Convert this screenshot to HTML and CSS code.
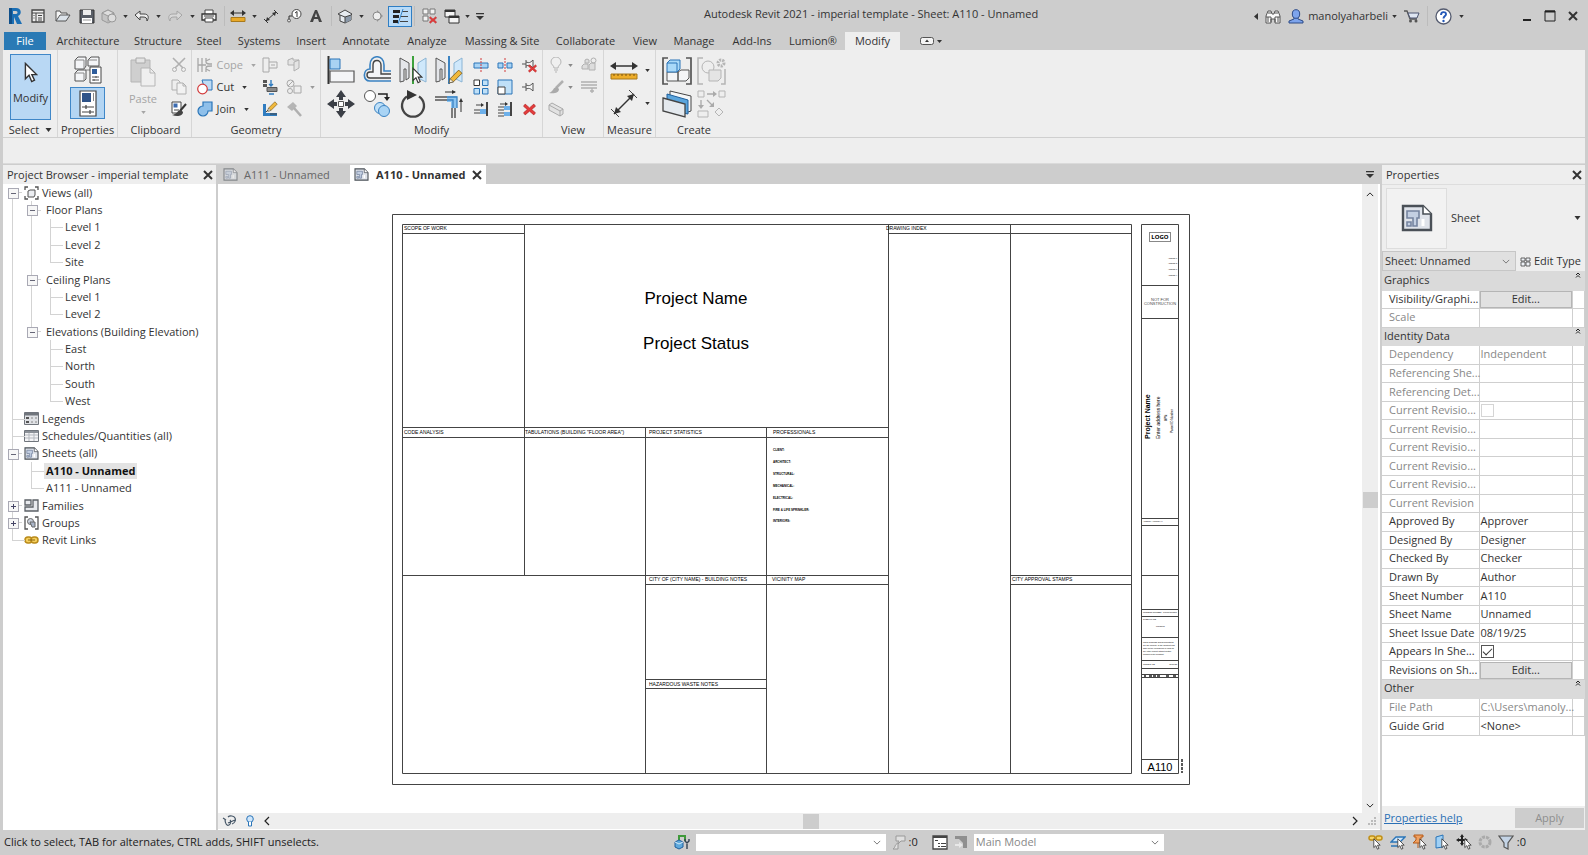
FILE: index.html
```html
<!DOCTYPE html>
<html lang="en">
<head>
<meta charset="utf-8">
<title>Autodesk Revit 2021 - imperial template - Sheet: A110 - Unnamed</title>
<link rel="stylesheet" href="styles.css">
</head>
<body>
<svg class="defs" aria-hidden="true">
  <symbol id="sheet" viewBox="0 0 16 14"><path d="M1 1h10l4 4v8H1z" fill="#dfe3ea" stroke="#4a5057" stroke-width="1.200"/><path d="M11 1v4h4" fill="#fff" stroke="#4a5057" stroke-width=".8"/><path d="M3 3.500h6v3.500h-1v4H6V7H3zM3 9h2v2H3z" fill="#c3cfe2" stroke="#7584a0" stroke-width=".8"/><path d="M11 11V7.500" stroke="#fff" stroke-width="1.500"/></symbol>
  <symbol id="arrow" viewBox="0 0 6 4"><path d="M0 0h6L3 4z" fill="currentColor"/></symbol>
  <symbol id="cursor" viewBox="0 0 10 15"><path d="M1 1v11l2.600-2.500L5.500 14l2-1-1.900-4H9z" fill="#fff" stroke="#333" stroke-width="1"/></symbol>
  <symbol id="chev" viewBox="0 0 10 6"><path d="M1 1l4 4 4-4" fill="none" stroke="currentColor" stroke-width="1.200"/></symbol>
  <symbol id="cross" viewBox="0 0 10 10"><path d="M1 1l8 8M9 1L1 9" stroke="currentColor" stroke-width="2"/></symbol>
  <symbol id="fold" viewBox="0 0 6 6"><path d="M1 3l2-2 2 2M1 5.500l2-2 2 2" fill="none" stroke="#222" stroke-width="1"/></symbol>
  <symbol id="redx" viewBox="0 0 12 12"><path d="M2 1L6 4.500 10 1l1.500 2L8 6l3.500 3-1.500 2L6 7.500 2 11 .5 9 4 6 .5 3z" fill="#e33b3b" stroke="#b02020" stroke-width=".6"/></symbol>
  <symbol id="pencil" viewBox="0 0 14 14"><path d="M1 13l1-4 8-8 3 3-8 8z" fill="#f1b93c" stroke="#7a5a1c" stroke-width=".8"/><path d="M1 13l1-4 3 3z" fill="#fff5dd" stroke="#444" stroke-width=".6"/></symbol>
</svg>

<header class="titlebar">
  <nav class="quick" aria-label="Quick access">
    <button aria-label="Revit menu"><svg width="16" height="18" viewBox="0 0 16 18"><path d="M2 1h7c6 0 6 7 2 8l4 8h-5L7 10v7H2z" fill="#1b6fb5"/><path d="M6 4h3c2 0 2 3 0 3H6z" fill="#cdcdcd"/><path d="M2 1h3v16H2z" fill="#0f4f8a"/></svg></button>
    <button aria-label="Home"><svg width="14" height="14" viewBox="0 0 14 14"><path d="M1 1h12v12H1z" fill="#eee" stroke="#444" stroke-width="1.300"/><path d="M1 4h12M5 4v9M2.500 6.500h1M2.500 9h1M7 6.500h4M7 9h4M7 11h4" stroke="#444" fill="none"/></svg></button>
    <button aria-label="Open"><svg width="16" height="14" viewBox="0 0 16 14"><path d="M1 12V2h4l1 2h6v3" fill="#f4f4f4" stroke="#555"/><path d="M1 12l4-6h10l-4 6z" fill="#dce3ea" stroke="#555"/></svg></button>
    <button aria-label="Save"><svg width="16" height="15" viewBox="0 0 16 15"><path d="M1 1h14v13H1z" fill="#5a5f68" stroke="#333"/><path d="M4 1h8v5H4z" fill="#eee"/><path d="M3 9h10v5H3z" fill="#fff"/><path d="M4 11h8" stroke="#999"/></svg></button>
    <button aria-label="Synchronize"><svg width="16" height="15" viewBox="0 0 16 15"><path d="M1 4l6-3 6 3v7l-6 3-6-3z" fill="#c4c4c4" stroke="#999"/><path d="M1 4l6-3 6 3-6 3z" fill="#dedede" stroke="#999"/><path d="M7 7v7" stroke="#aaa" fill="none"/><circle cx="11" cy="9" r="4" fill="#ddd" stroke="#999"/></svg></button>
    <button class="dd" aria-label="Synchronize options"><svg width="5" height="3"><use href="#arrow"/></svg></button>
    <button aria-label="Undo"><svg width="16" height="12" viewBox="0 0 16 12"><path d="M1 5l5-4v3h4c5 0 5 4 3 7 0-3-1-4-4-4H6v3z" fill="#eee" stroke="#444"/></svg></button>
    <button class="dd" aria-label="Undo list"><svg width="5" height="3"><use href="#arrow"/></svg></button>
    <button aria-label="Redo"><svg width="16" height="12" viewBox="0 0 16 12"><path d="M15 5l-5-4v3H6C1 4 1 8 3 11c0-3 1-4 4-4h3v3z" fill="#d8d8d8" stroke="#a5a5a5"/></svg></button>
    <button class="dd" aria-label="Redo list"><svg width="5" height="3"><use href="#arrow"/></svg></button>
    <button aria-label="Print"><svg width="16" height="14" viewBox="0 0 16 14"><path d="M4 5V1h8v4" fill="#fff" stroke="#444"/><path d="M1 5h14v6H1z" fill="#f2f2f2" stroke="#333" stroke-width="1.300"/><path d="M4 9h8v4H4z" fill="#fff" stroke="#444"/><path d="M3 7h10" stroke="#444"/></svg></button>
    <i class="vsep"></i>
    <button aria-label="Measure"><svg width="16" height="12" viewBox="0 0 16 12"><path d="M2 3h12" stroke="#333"/><path d="M4 0v6L0 3zM12 0v6l4-3z" fill="#333"/><path d="M1 7.500h14v4H1z" fill="#e9a928" stroke="#a97a1c"/></svg></button>
    <button class="dd" aria-label="Measure options"><svg width="5" height="3"><use href="#arrow"/></svg></button>
    <button aria-label="Aligned dimension"><svg width="16" height="15" viewBox="0 0 16 15"><path d="M3 12L13 3M1 10l4 4M11 1l4 4" stroke="#333"/><path d="M3 12l1-4 3 3zM13 3l-1 4-3-3z" fill="#333"/></svg></button>
    <button aria-label="Tag by category"><svg width="15" height="14" viewBox="0 0 15 14"><circle cx="9.500" cy="5" r="4.500" fill="#fff" stroke="#444"/><path d="M8 4l2-1.500V8" fill="none" stroke="#333"/><path d="M5 7H2v4" fill="none" stroke="#333"/><circle cx="2" cy="11.500" r="1.500" fill="#ddd" stroke="#333" stroke-width=".7"/></svg></button>
    <button aria-label="Text"><svg width="14" height="14" viewBox="0 0 14 14"><path d="M1 13L6 1h2l5 12h-3l-1-3H5l-1 3z" fill="#444"/><path d="M5.700 8h2.600L7 4z" fill="#cdcdcd"/></svg></button>
    <i class="vsep"></i>
    <button aria-label="3D view"><svg width="16" height="15" viewBox="0 0 16 15"><path d="M1 5l7-4 7 4-1 1v5l-6 3-5-2V6z" fill="#e6ebf0" stroke="#444"/><path d="M8 8l6-2v5l-6 3z" fill="#8a98a8"/><path d="M3 6l5 2 6-2M8 8v6" fill="none" stroke="#444"/></svg></button>
    <button class="dd" aria-label="3D view options"><svg width="5" height="3"><use href="#arrow"/></svg></button>
    <button aria-label="Section"><svg width="13" height="12" viewBox="0 0 13 12"><path d="M6 0l6 6-6 6z" fill="#999"/><circle cx="6" cy="6" r="4" fill="#eee" stroke="#888"/></svg></button>
    <button class="lit" aria-label="Thin lines" aria-pressed="true"><svg width="17" height="15" viewBox="0 0 17 15"><path d="M1 2.500h7M1 7.500h6M1 12.500h5" stroke="#222" stroke-width="3"/><path d="M10 2.500h6M9 7.500h7M8 12.500h8" stroke="#444"/><path d="M11 0L6 15" stroke="#3a86c8"/></svg></button>
    <i class="vsep"></i>
    <button aria-label="Close inactive views"><svg width="15" height="16" viewBox="0 0 15 16"><path d="M1 1h5v5H1zM8 1h5v5H8zM1 8h5v5H1z" fill="#f2f2f2" stroke="#777"/><svg x="7" y="8" width="8" height="8"><use href="#redx"/></svg></svg></button>
    <button aria-label="Switch windows"><svg width="16" height="15" viewBox="0 0 16 15"><path d="M1 1h10v7H1zM5 7h10v7H5z" fill="#f4f4f4" stroke="#333"/><path d="M1 2h10M5 8h10" stroke="#333" stroke-width="2"/></svg></button>
    <button class="dd" aria-label="Switch windows list"><svg width="5" height="3"><use href="#arrow"/></svg></button>
    <button class="dd" aria-label="Customize toolbar"><svg width="8" height="7" viewBox="0 0 8 7"><path d="M0 0h8v1.300H0zM0 3h8L4 7z" fill="#333"/></svg></button>
  </nav>
  <h1 class="apptitle">Autodesk Revit 2021 - imperial template - Sheet: A110 - Unnamed</h1>
  <div class="account">
    <button class="dd" aria-label="Collapse search"><svg width="4" height="7" viewBox="0 0 4 7"><path d="M4 0v7L0 3.500z" fill="#333"/></svg></button>
    <button aria-label="Search"><svg width="16" height="15" viewBox="0 0 16 15"><path d="M1 14V7l2-5h3l1 3h2l1-3h3l2 5v7h-5v-4H6v4z" fill="#fafafa" stroke="#555"/><path d="M3 4h3M10 4h3M1 8h5v5M15 8h-5v5M3 8v5M13 8v5" stroke="#555" fill="none"/></svg></button>
    <button class="user"><svg width="16" height="15" viewBox="0 0 16 15"><path d="M1 14v-2l5-2V8h4v2l5 2v2z" fill="#7da4ec" stroke="#2c4a86"/><ellipse cx="8" cy="5" rx="3.700" ry="4.300" fill="#7da4ec" stroke="#2c4a86"/></svg><span>manolyaharbeli</span><svg width="5" height="3"><use href="#arrow"/></svg></button>
    <button aria-label="App store"><svg width="16" height="14" viewBox="0 0 16 14"><path d="M0 2h3l3 8h7" fill="none" stroke="#555" stroke-width="1.300"/><path d="M4 4h11l-2 5H6z" fill="#dfe6f2" stroke="#4c5570"/><circle cx="6.500" cy="12" r="1.500" fill="#555"/><circle cx="12" cy="12" r="1.500" fill="#555"/></svg></button>
    <i class="vsep"></i>
    <button aria-label="Help"><svg width="17" height="17" viewBox="0 0 17 17"><circle cx="8.500" cy="8.500" r="7.500" fill="#fff" stroke="#555c70" stroke-width="1.300"/><path d="M6 7c0-4 5-3.500 5-.8C11 8 8.500 8 8.500 10.500" fill="none" stroke="#2458b8" stroke-width="1.900"/><circle cx="8.500" cy="13" r="1.200" fill="#2458b8"/></svg></button>
    <button class="dd" aria-label="Help menu"><svg width="5" height="3"><use href="#arrow"/></svg></button>
  </div>
  <div class="winbtns">
    <button aria-label="Minimize"><svg width="10" height="12" viewBox="0 0 10 12"><path d="M1 10h8" stroke="#222" stroke-width="2"/></svg></button>
    <button aria-label="Maximize"><svg width="12" height="12" viewBox="0 0 12 12"><path d="M1 1h10v10H1z" fill="none" stroke="#222"/><path d="M1 1.500h10" stroke="#222" stroke-width="2"/></svg></button>
    <button aria-label="Close"><svg width="10" height="10"><use href="#cross"/></svg></button>
  </div>
</header>

<nav class="tabs" aria-label="Ribbon tabs">
  <button class="file">File</button><button>Architecture</button><button>Structure</button><button>Steel</button><button>Systems</button><button>Insert</button><button>Annotate</button><button>Analyze</button><button>Massing &amp; Site</button><button>Collaborate</button><button>View</button><button>Manage</button><button>Add-Ins</button><button>Lumion®</button><button class="current">Modify</button>
  <button aria-label="Ribbon display"><svg width="22" height="8" viewBox="0 0 22 8"><rect x=".5" y=".5" width="13" height="7" rx="2" fill="#f4f4f4" stroke="#555"/><path d="M5 5l2-2.500L9 5z" fill="#333"/><path d="M17 3h5l-2.500 3z" fill="#333"/></svg></button>
</nav>

<section class="ribbon">
  <div class="panel p-select">
    <div class="tools"><button class="bigmodify"><svg width="14" height="21"><use href="#cursor"/></svg><span>Modify</span></button></div>
    <h2>Select <svg width="7" height="4"><use href="#arrow"/></svg></h2>
  </div>
  <div class="panel p-props">
    <div class="tools">
      <button aria-label="Type properties"><svg width="28" height="28" viewBox="0 0 28 28"><path d="M1 4l3-3h8v9l-2 3H1zM14 4l3-3h8v9H14zM1 17l3-3h8v9l-2 2H1z" fill="#f4f5f7" stroke="#555"/><path d="M1 4h9v9M14 4h9M1 17h9v8M12 14h4" stroke="#888" fill="none"/><path d="M16 11h11v16H16z" fill="#fff" stroke="#444"/><path d="M18 13h5v5h-5z" fill="#2f5d9b"/><path d="M18 21h7M18 24h7M22 20v2M20 23v2" stroke="#555"/></svg></button>
      <button class="on" aria-label="Properties" aria-pressed="true"><svg width="18" height="27" viewBox="0 0 18 27"><path d="M1 1h16v25H1z" fill="#fff" stroke="#444" stroke-width="1.200"/><path d="M3 3h9v9H3z" fill="#2f5388"/><path d="M14.500 3v8" stroke="#888"/><path d="M3 17h12M3 22h12M7 15v4M11 20v4" stroke="#444" stroke-width="1.200"/></svg></button>
    </div>
    <h2>Properties</h2>
  </div>
  <div class="panel p-clip">
    <div class="tools">
      <button class="paste off"><svg width="26" height="30" viewBox="0 0 26 30"><path d="M1 3h19v22H1z" fill="#cfcfcf" stroke="#b5b5b5"/><path d="M6 1h9v5H6z" fill="#e4e4e4" stroke="#aaa"/><path d="M11 11h9l5 5v13H11z" fill="#efefef" stroke="#b5b5b5"/><path d="M20 11v5h5" fill="none" stroke="#b5b5b5"/></svg><span>Paste</span><svg width="5" height="3"><use href="#arrow"/></svg></button>
      <div class="stack">
        <button aria-label="Cut to clipboard"><svg width="16" height="16" viewBox="0 0 16 16"><path d="M2 1l10 10M14 1L4 11" stroke="#b0b0b0" stroke-width="1.600"/><circle cx="3.500" cy="12.500" r="2" fill="none" stroke="#b0b0b0"/><circle cx="12.500" cy="12.500" r="2" fill="none" stroke="#b0b0b0"/></svg></button>
        <button aria-label="Copy to clipboard"><svg width="16" height="16" viewBox="0 0 16 16"><path d="M1 1h6l2 2v8H1z" fill="#eee" stroke="#b0b0b0"/><path d="M6 4h6l3 3v8H6z" fill="#f2f2f2" stroke="#b0b0b0"/><path d="M12 4v3h3" fill="none" stroke="#b0b0b0"/></svg></button>
        <button aria-label="Match type"><svg width="16" height="16" viewBox="0 0 16 16"><path d="M1 1h9v11H1z" fill="#fff" stroke="#444"/><path d="M2.500 2.500h4v4h-4z" fill="#3b6bb0"/><path d="M3 9h5" stroke="#444"/><path d="M15 3l-6 7" stroke="#333" stroke-width="2"/><path d="M10 9c-4 0-3 4-9 5 5 2 11 1 11-3z" fill="#444"/></svg></button>
      </div>
    </div>
    <h2>Clipboard</h2>
  </div>
  <div class="panel p-geo">
    <div class="tools">
      <button class="row off"><svg width="16" height="16" viewBox="0 0 16 16"><path d="M1 1v14M5 1v14M1 8h8M9 1v4c0 2 2 2 6 2M9 15v-4c0-2 2-2 6-2M9 4l4-2M9 12l4 2" fill="none" stroke="#a8a8a8" stroke-width="1.300"/></svg><span>Cope</span><svg class="push" width="5" height="3"><use href="#arrow"/></svg></button>
      <button class="row"><svg width="16" height="16" viewBox="0 0 16 16"><path d="M5 1h10v10H8z" fill="#bfdcf4" stroke="#2a75b8"/><circle cx="5.500" cy="10" r="4.800" fill="#fff" stroke="#d23b3b" stroke-width="1.200"/></svg><span>Cut</span><svg class="push" width="5" height="3"><use href="#arrow"/></svg></button>
      <button class="row"><svg width="16" height="16" viewBox="0 0 16 16"><path d="M6 1h9v9h-4a5 5 0 1 1-5-5z" fill="#8fc0ea" stroke="#2a75b8" stroke-width="1.200"/></svg><span>Join</span><svg class="push" width="5" height="3"><use href="#arrow"/></svg></button>
      <div class="stack">
        <button aria-label="Wall joins"><svg width="16" height="16" viewBox="0 0 16 16"><path d="M1 1h6v4h8v6H7v4H1z" fill="#eee" stroke="#a8a8a8"/><path d="M7 5v6M9 8h4" stroke="#a8a8a8"/></svg></button>
        <button aria-label="Beam joins"><svg width="16" height="16" viewBox="0 0 16 16"><path d="M1 1h4v3H1zM1 5h4v3H1z" fill="#555"/><path d="M5 8.500h10v4H5z" fill="#8a8a8a" stroke="#555"/><path d="M9 1v6M7 5l2 2 2-2M7 15h5" fill="none" stroke="#2f7cc0" stroke-width="1.400"/></svg></button>
        <button aria-label="Split face"><svg width="16" height="16" viewBox="0 0 16 16"><path d="M1 3h3v9h11v3H1z" fill="#2f7cc0"/><path d="M4 11l4-4M8 13h7" stroke="#444"/><svg x="5" y="0" width="11" height="11"><use href="#pencil"/></svg></svg></button>
      </div>
      <div class="stack">
        <button aria-label="Paint"><svg width="16" height="16" viewBox="0 0 16 16"><path d="M2 3l5-2v2h6v8l-5 3V8H2z" fill="#e4e4e4" stroke="#b0b0b0"/><path d="M8 8V5l5-2" fill="none" stroke="#b0b0b0"/></svg></button>
        <button aria-label="Demolish options"><svg width="16" height="16" viewBox="0 0 16 16"><circle cx="4.500" cy="4.500" r="3.500" fill="none" stroke="#a8a8a8"/><circle cx="4" cy="12" r="2.500" fill="none" stroke="#a8a8a8"/><path d="M2 7l5-5M8 7h7v7H8z" fill="#eee" stroke="#a8a8a8"/></svg></button>
        <button aria-label="Demolish"><svg width="16" height="16" viewBox="0 0 16 16"><path d="M1 6l6-5 4 4-5 5z" fill="#b5b5b5"/><path d="M8 7l7 8" stroke="#b0b0b0" stroke-width="2.500"/></svg></button>
      </div>
      <svg class="lone" width="5" height="3"><use href="#arrow"/></svg>
    </div>
    <h2>Geometry</h2>
  </div>
  <div class="panel p-modify">
    <div class="tools">
      <button aria-label="Align"><svg width="28" height="28" viewBox="0 0 28 28"><path d="M1.500 0v28" stroke="#333" stroke-width="2"/><path d="M3 3h10v10H3z" fill="#a9d2f3" stroke="#2a75b8"/><path d="M3 15h24v11H3z" fill="#f4f5f7" stroke="#555" stroke-width="1.200"/></svg></button>
      <button aria-label="Offset"><svg width="28" height="28" viewBox="0 0 28 28"><path d="M28 15h-7V9c0-11-14-11-14 0v4C0 13-1 25 7 25h21" fill="none" stroke="#3b83c2" stroke-width="1.600"/><path d="M28 18h-10V9c0-6-8-6-8 0v7H7c-4 0-4 6 0 6h21" fill="#f4f5f7" stroke="#444" stroke-width="1.400"/></svg></button>
      <button aria-label="Mirror - Pick axis"><svg width="28" height="28" viewBox="0 0 28 28"><path d="M1 2l9 5v15l-3 2V13H5v12l-4 1z" fill="#e4e6ea" stroke="#555"/><path d="M27 2l-8 5v15l8 4z" fill="#cfe8fb" stroke="#8ab4d4"/><path d="M14 0v28" stroke="#3da23d" stroke-width="2"/><svg x="13" y="11" width="11" height="17"><use href="#cursor"/></svg></svg></button>
      <button aria-label="Mirror - Draw axis"><svg width="28" height="28" viewBox="0 0 28 28"><path d="M1 2l9 5v15l-3 2V13H5v12l-4 1z" fill="#e4e6ea" stroke="#555"/><path d="M27 2l-8 5v15l8 4z" fill="#cfe8fb" stroke="#8ab4d4"/><path d="M14 0v28" stroke="#3b83c2" stroke-width="2"/><svg x="13" y="13" width="15" height="15"><use href="#pencil"/></svg></svg></button>
      <button aria-label="Move"><svg width="28" height="28" viewBox="0 0 28 28"><path d="M14 0l5 7h-3v3h-4V7H9zM14 28l5-7h-3v-3h-4v3H9zM0 14l7-5v3h3v4H7v3zM28 14l-7-5v3h-3v4h3v3z" fill="#3b3f46"/><path d="M11.500 11.500h5v5h-5z" fill="#fff" stroke="#555"/></svg></button>
      <button aria-label="Copy"><svg width="28" height="28" viewBox="0 0 28 28"><circle cx="7" cy="6" r="5.500" fill="#fff" stroke="#555"/><circle cx="17" cy="18" r="5.500" fill="#bfe0f8" stroke="#3b83c2"/><circle cx="21" cy="21" r="5.500" fill="#a9d4f5" stroke="#3b83c2"/><path d="M15 4h9v5" fill="none" stroke="#222" stroke-width="1.500"/><path d="M21 7h6l-3 4z" fill="#222"/></svg></button>
      <button aria-label="Rotate"><svg width="28" height="28" viewBox="0 0 28 28"><path d="M8 6.500a11 11 0 1 0 12 0" fill="none" stroke="#444" stroke-width="2.300"/><path d="M8 0l10 5-10 5z" fill="#333"/></svg></button>
      <button aria-label="Trim/Extend to corner"><svg width="28" height="28" viewBox="0 0 28 28"><path d="M0 7h12M0 10h12M17 18v10M20 18v10" stroke="#555" stroke-width="1.500"/><path d="M12 6h10v12h-6V12h-4z" fill="#8cc4f0"/><path d="M12 7h10v11M12 10h6v8" fill="none" stroke="#3b83c2" stroke-width="1.300"/><path d="M10 2h10M26 22V10" stroke="#333"/><path d="M17 0l4 2-4 2zM24 12l2-4 2 4z" fill="#333"/></svg></button>
      <div class="minis">
        <button aria-label="Split element"><svg width="16" height="16" viewBox="0 0 16 16"><path d="M1 6h14v5H1z" fill="#a9d4f5" stroke="#2a75b8"/><path d="M8 1v14" stroke="#d23b3b" stroke-dasharray="2 1"/></svg></button>
        <button aria-label="Split with gap"><svg width="16" height="16" viewBox="0 0 16 16"><path d="M1 6h5v5H1zM10 6h5v5h-5z" fill="#a9d4f5" stroke="#2a75b8"/><path d="M8 1v14" stroke="#d23b3b" stroke-dasharray="2 1"/></svg></button>
        <button aria-label="Unpin"><svg width="16" height="16" viewBox="0 0 16 16"><path d="M1 7h4M5 3v8M5 5c3 1 4 1 7-2v8c-3-3-4-3-7-2" fill="#f4f4f4" stroke="#555"/><svg x="7" y="7" width="9" height="9"><use href="#redx"/></svg></svg></button>
        <button aria-label="Array"><svg width="16" height="16" viewBox="0 0 16 16"><path d="M1 1h5.500v5.500H1z" fill="#fff" stroke="#333"/><path d="M9.500 1H15v5.500H9.500zM1 9.500h5.500V15H1zM9.500 9.500H15V15H9.500z" fill="#bfe0f8" stroke="#2a75b8"/></svg></button>
        <button aria-label="Scale"><svg width="16" height="16" viewBox="0 0 16 16"><path d="M1 1h14v14H1z" fill="#bfe0f8" stroke="#2a75b8"/><path d="M1 8h7v7H1z" fill="#fff" stroke="#444"/></svg></button>
        <button aria-label="Pin"><svg width="16" height="16" viewBox="0 0 16 16"><path d="M1 8h4M5 4v8M5 6c3 1 4 1 7-2v8c-3-3-4-3-7-2" fill="#f4f4f4" stroke="#555"/></svg></button>
        <button aria-label="Trim/Extend single"><svg width="16" height="16" viewBox="0 0 16 16"><path d="M14 1v14" stroke="#444" stroke-width="2"/><path d="M1 9h6M1 12h6M3 4h5" stroke="#444"/><path d="M7 8h6v5H7z" fill="#6db0ea"/><path d="M8 2l3 2-3 2z" fill="#333"/></svg></button>
        <button aria-label="Trim/Extend multiple"><svg width="16" height="16" viewBox="0 0 16 16"><path d="M14 1v14" stroke="#444" stroke-width="2"/><path d="M1 6h6M1 9h6M1 12h6M1 15h6M3 3h5" stroke="#444"/><path d="M7 5h6v4H7zM7 11h6v4H7z" fill="#6db0ea"/><path d="M8 1l3 2-3 2z" fill="#333"/></svg></button>
        <button aria-label="Delete"><svg width="13" height="13"><use href="#redx"/></svg></button>
      </div>
    </div>
    <h2>Modify</h2>
  </div>
  <div class="panel p-view">
    <div class="tools">
      <button class="pair" aria-label="Hide in view"><svg width="16" height="16" viewBox="0 0 16 16"><path d="M6 11c0-3-3-3-3-6a5 5 0 0 1 10 0c0 3-3 3-3 6zM6 13h4M7 15h2" fill="#f0f0f0" stroke="#b5b5b5"/></svg><svg width="5" height="3"><use href="#arrow"/></svg></button>
      <button aria-label="Displace elements"><svg width="16" height="16" viewBox="0 0 16 16"><path d="M1 9l2-2h4v5H1zM8 8l2-2h4v7H8zM4 3l2-1 2 1v3H4z" fill="#ddd" stroke="#b0b0b0"/><circle cx="12.500" cy="3.500" r="2.500" fill="none" stroke="#b0b0b0"/></svg></button>
      <button class="pair" aria-label="Override graphics"><svg width="16" height="16" viewBox="0 0 16 16"><path d="M15 2L8 9" stroke="#b0b0b0" stroke-width="2.500"/><path d="M9 8c-4 0-3 4-8 6 5 1 10 0 10-4z" fill="#aaa"/></svg><svg width="5" height="3"><use href="#arrow"/></svg></button>
      <button aria-label="Linework"><svg width="16" height="16" viewBox="0 0 16 16"><path d="M0 3h16M0 6h16M0 9h16M11 9v5M9 12h4" stroke="#b0b0b0" stroke-width="1.300"/></svg></button>
      <button class="pair" aria-label="Selection box"><svg width="16" height="16" viewBox="0 0 16 16"><path d="M1 4l3-2 11 6v5l-3 2L1 9z" fill="#e2e2e2" stroke="#aaa"/><path d="M1 4l11 6v5M12 10l3-2" fill="none" stroke="#aaa"/></svg></button>
    </div>
    <h2>View</h2>
  </div>
  <div class="panel p-measure">
    <div class="tools">
      <button class="wide" aria-label="Measure between"><svg width="28" height="28" viewBox="0 0 28 28"><path d="M4 9h20" stroke="#333" stroke-width="1.500"/><path d="M6 5v8L0 9zM22 5v8l6-4z" fill="#333"/><path d="M1 17h26v5H1z" fill="#eead28" stroke="#a8781a"/><path d="M4 17v2M8 17v2M12 17v2M16 17v2M20 17v2M24 17v2" stroke="#7a5510"/></svg><svg width="5" height="3"><use href="#arrow"/></svg></button>
      <button class="wide" aria-label="Aligned dimension tool"><svg width="28" height="28" viewBox="0 0 28 28"><path d="M4 24L24 4" stroke="#333" stroke-width="1.500"/><path d="M1 19l8 8M19 0l8 8" stroke="#444"/><path d="M4 24l2-7 5 5zM24 4l-2 7-5-5z" fill="#333"/></svg><svg width="5" height="3"><use href="#arrow"/></svg></button>
    </div>
    <h2>Measure</h2>
  </div>
  <div class="panel p-create">
    <div class="tools">
      <button aria-label="Create assembly"><svg width="30" height="28" viewBox="0 0 30 28"><path d="M6 1H1v26h5M24 1h5v26h-5" fill="none" stroke="#555" stroke-width="1.700"/><path d="M5 15h11v9H5zM16 15l3-2h8v8l-3 3h-8z" fill="#f4f5f7" stroke="#555"/><path d="M5 6l3-3h10v9l-3 3H5z" fill="#a9d9f8" stroke="#2a75b8"/><path d="M5 6h10v9" fill="none" stroke="#2a75b8"/></svg></button>
      <button aria-label="Create group"><svg width="30" height="28" viewBox="0 0 30 28"><path d="M6 1H1v26h5M24 27h4V12" fill="none" stroke="#b5b5b5" stroke-width="1.500"/><circle cx="11" cy="10" r="6" fill="#eee" stroke="#b5b5b5"/><path d="M12 13h12v8l-3 3h-9z" fill="#e4e4e4" stroke="#b5b5b5"/><circle cx="24" cy="6" r="3" fill="none" stroke="#b5b5b5" stroke-width="3" stroke-dasharray="2 1"/></svg></button>
      <button aria-label="Create parts"><svg width="30" height="28" viewBox="0 0 30 28"><path d="M8 1l21 5v15l-3 1L8 15z" fill="#f4f6f8" stroke="#444"/><path d="M5 4l21 6v14L5 20z" fill="#5aa5dd" stroke="#1e5f9c"/><path d="M1 8l22 6v13L1 21z" fill="#e4e9ee" stroke="#444" stroke-width="1.300"/></svg></button>
      <button aria-label="Create similar"><svg width="30" height="28" viewBox="0 0 30 28"><path d="M1 1h6v6H1zM22 1h6v6h-6zM1 21h10v6H1zM22 18l4 4-4 4-4-4z" fill="#eee" stroke="#b5b5b5"/><path d="M10 4h7M4 10v7M10 10l6 6" stroke="#aaa" stroke-width="1.300"/><path d="M16 1l4 3-4 3zM1 15h6l-3 4zM17 12v5h-5z" fill="#aaa"/></svg></button>
    </div>
    <h2>Create</h2>
  </div>
</section>
<div class="optionsbar"></div>

<main class="work">
  <aside class="browser">
    <header class="dockhead"><h2>Project Browser - imperial template</h2><button aria-label="Close Project Browser"><svg width="10" height="10"><use href="#cross"/></svg></button></header>
    <ul class="tree">
      <li><i class="g first box minus"></i><svg width="15" height="14" viewBox="0 0 15 14"><path d="M4 1H1v3M11 1h3v3M4 13H1v-3M11 13h3v-3" fill="none" stroke="#555" stroke-width="1.300"/><path d="M4 5l2-1h5v5l-1 2H4z" fill="#eceef2" stroke="#555"/></svg><span>Views (all)</span></li>
      <li><i class="g v"></i><i class="g box minus"></i><span>Floor Plans</span></li>
      <li><i class="g v"></i><i class="g v"></i><i class="g t"></i><span>Level 1</span></li>
      <li><i class="g v"></i><i class="g v"></i><i class="g t"></i><span>Level 2</span></li>
      <li><i class="g v"></i><i class="g v"></i><i class="g t end"></i><span>Site</span></li>
      <li><i class="g v"></i><i class="g box minus"></i><span>Ceiling Plans</span></li>
      <li><i class="g v"></i><i class="g v"></i><i class="g t"></i><span>Level 1</span></li>
      <li><i class="g v"></i><i class="g v"></i><i class="g t end"></i><span>Level 2</span></li>
      <li><i class="g v"></i><i class="g box minus end"></i><span>Elevations (Building Elevation)</span></li>
      <li><i class="g v"></i><i class="g"></i><i class="g t"></i><span>East</span></li>
      <li><i class="g v"></i><i class="g"></i><i class="g t"></i><span>North</span></li>
      <li><i class="g v"></i><i class="g"></i><i class="g t"></i><span>South</span></li>
      <li><i class="g v"></i><i class="g"></i><i class="g t end"></i><span>West</span></li>
      <li><i class="g t"></i><svg width="15" height="13" viewBox="0 0 15 13"><path d="M.5.500h14v12H.5z" fill="#dfe1e5" stroke="#70757c"/><path d="M1 2h13" stroke="#70757c" stroke-width="3"/><path d="M2 5h3v2H2zM2 9h3v2H2z" fill="#555"/><path d="M7 6h2M11 6h2M7 10h2M11 10h2" stroke="#888"/></svg><span>Legends</span></li>
      <li><i class="g t"></i><svg width="15" height="12" viewBox="0 0 15 12"><path d="M.5.500h14v11H.5z" fill="#f4f4f6" stroke="#70757c"/><path d="M1 2h13" stroke="#8b9097" stroke-width="2"/><path d="M1 5h13M1 8h13M5 3v8M10 3v8" stroke="#b5b9bf"/></svg><span>Schedules/Quantities (all)</span></li>
      <li><i class="g box minus"></i><svg width="15" height="13"><use href="#sheet"/></svg><span>Sheets (all)</span></li>
      <li><i class="g v"></i><i class="g t"></i><span class="sel">A110 - Unnamed</span></li>
      <li><i class="g v"></i><i class="g t end"></i><span>A111 - Unnamed</span></li>
      <li><i class="g box plus"></i><svg width="15" height="13" viewBox="0 0 15 13"><path d="M1 1h6v5H1zM9 1h5v11H1V8h8z" fill="#e8eaee" stroke="#5c6167" stroke-width="1.300"/></svg><span>Families</span></li>
      <li><i class="g box plus"></i><svg width="15" height="14" viewBox="0 0 15 14"><path d="M4 1H1v12h3M11 1h3v12h-3" fill="none" stroke="#555" stroke-width="1.300"/><circle cx="6.500" cy="5.500" r="3" fill="#ccd3df" stroke="#666"/><path d="M6 6h5v5H8z" fill="#aab5c8" stroke="#666"/></svg><span>Groups</span></li>
      <li><i class="g t end"></i><svg width="15" height="8" viewBox="0 0 15 8"><rect x="1" y="1" width="7" height="6" rx="3" fill="#f5cf5c" stroke="#b98a1a" stroke-width="1.500"/><rect x="7" y="1" width="7" height="6" rx="3" fill="#f5cf5c" stroke="#b98a1a" stroke-width="1.500"/><path d="M4 4h7" stroke="#8a6510"/></svg><span>Revit Links</span></li>
    </ul>
  </aside>

  <section class="views">
    <nav class="viewtabs">
      <button class="idle"><svg width="15" height="13"><use href="#sheet"/></svg><span>A111 - Unnamed</span></button>
      <div class="active"><svg width="15" height="13"><use href="#sheet"/></svg><span>A110 - Unnamed</span><button aria-label="Close view"><svg width="10" height="10"><use href="#cross"/></svg></button></div>
      <button class="more" aria-label="List views"><svg width="8" height="7" viewBox="0 0 8 7"><path d="M0 0h8v1.300H0zM0 3h8L4 7z" fill="#333"/></svg></button>
    </nav>
    <div class="viewbody">
      <svg class="drawing" viewBox="218 184 1144 629" role="img" aria-label="Sheet A110">
        <g class="lines">
          <path d="M392.500 214.500h797v570h-797z"/>
          <path d="M402.500 224.500h729v549h-729z"/>
          <path d="M524.500 224v351M645.500 428v346M766.500 428v346M888.500 224v550M1010.500 224v550"/>
          <path d="M402 233.500h122M888 233.500h243M402 427.500h486M402 437.500h486M402 575.500h486M1010 575.500h121M645 584.500h243M1010 584.500h121M645 679.500h121M645 688.500h121"/>
          <path d="M1141.500 224.500h37v549h-37z"/>
          <path d="M1141 285.500h38M1141 318.500h38M1141 518.500h38M1141 525.500h38M1141 575.500h38M1141 609.500h38M1141 616.500h38M1141 637.500h38M1141 660.500h38M1141 668.500h38M1141 674.500h38M1141 677.500h38M1141 759.500h38"/>
        </g>
        <path d="M1144 676h2M1149 676h12M1166 676h3M1173 676h3M1182 759v14" stroke="#222" stroke-width="1.500" stroke-dasharray="3 1"/>
        <rect x="1149.500" y="232.500" width="21" height="9" fill="#fff" stroke="#888"/>
        <g class="caps">
          <text x="404" y="230">SCOPE OF WORK</text>
          <text x="886" y="230">DRAWING INDEX</text>
          <text x="404" y="434">CODE ANALYSIS</text>
          <text x="525" y="434">TABULATIONS (BUILDING "FLOOR AREA")</text>
          <text x="649" y="434">PROJECT STATISTICS</text>
          <text x="773" y="434">PROFESSIONALS</text>
          <text x="649" y="581">CITY OF (CITY NAME) - BUILDING NOTES</text>
          <text x="772" y="581">VICINITY MAP</text>
          <text x="1012" y="581">CITY APPROVAL STAMPS</text>
          <text x="649" y="686">HAZARDOUS WASTE NOTES</text>
        </g>
        <g class="pros">
          <text x="773" y="451">CLIENT:</text><text x="773" y="463">ARCHITECT:</text><text x="773" y="475">STRUCTURAL:</text><text x="773" y="487">MECHANICAL:</text><text x="773" y="499">ELECTRICAL:</text><text x="773" y="511">FIRE &amp; LIFE SPRINKLER:</text><text x="773" y="522">INTERIORS:</text>
        </g>
        <g class="names"><text x="696" y="304">Project Name</text><text x="696" y="349">Project Status</text></g>
        <text class="logo" x="1160" y="239">LOGO</text>
        <g class="tiny end"><text x="1177" y="259">Address 1</text><text x="1177" y="264">Address 2</text><text x="1177" y="270">Address 3</text><text x="1177" y="276">Address 4</text><text x="1177" y="613">Project Number</text><text x="1177" y="665">08/19/25</text></g>
        <g class="stamp"><text x="1160" y="301">NOT FOR</text><text x="1160" y="305">CONSTRUCTION</text></g>
        <g class="tiny"><text x="1143" y="522">AGENCY APPROVAL</text><text x="1143" y="613">PROJECT NUMBER</text><text x="1143" y="620">SHEET NAME</text><text x="1156" y="627">Unnamed</text><text x="1143" y="665">ISSUE DATE</text>
          <text x="1143" y="643">These drawings and specifications</text><text x="1143" y="646">are the property of the architect and</text><text x="1143" y="649">shall not be reproduced or used for</text><text x="1143" y="652">any other project without written</text><text x="1143" y="655">consent of the architect.</text></g>
        <text class="vname" transform="translate(1150 439) rotate(-90)">Project Name</text>
        <text class="vaddr" transform="translate(1160 439) rotate(-90)">Enter address here</text>
        <text class="vsmall" transform="translate(1167 421) rotate(-90)">APN:</text>
        <text class="vsmall" transform="translate(1173 433) rotate(-90)">Parcel ID Number</text>
        <text class="number" x="1160" y="771">A110</text>
      </svg>
      <div class="vscroll"><svg width="8" height="5" class="up"><use href="#chev"/></svg><i></i><svg width="8" height="5"><use href="#chev"/></svg></div>
    </div>
    <div class="hscroll">
      <button aria-label="Reveal constraints"><svg width="16" height="12" viewBox="0 0 16 12"><path d="M1 3l3 2M3 4c0 5 2 7 4 6s2-4 1-5M6 2c2-2 6-1 7 1s0 5-3 6M6 8l7-3" fill="none" stroke="#456" stroke-width="1.200"/></svg></button>
      <button aria-label="Temporary hide"><svg width="8" height="12" viewBox="0 0 8 12"><circle cx="4" cy="4" r="3.300" fill="#cfe6fb" stroke="#2a75b8"/><path d="M2.500 7v4h3V7" fill="#fff" stroke="#2a75b8"/></svg></button>
      <svg class="left" width="10" height="6"><use href="#chev"/></svg><i></i><svg class="right" width="10" height="6"><use href="#chev"/></svg>
      <svg class="grip" width="8" height="8" viewBox="0 0 8 8"><path d="M6 0h2v2H6zM3 3h2v2H3zM6 3h2v2H6zM0 6h2v2H0zM3 6h2v2H3zM6 6h2v2H6z" fill="#bbb"/></svg>
    </div>
  </section>

  <aside class="props">
    <header class="dockhead"><h2>Properties</h2><button aria-label="Close Properties"><svg width="10" height="10"><use href="#cross"/></svg></button></header>
    <button class="family"><span class="thumb"><svg width="32" height="28"><use href="#sheet"/></svg></span><span>Sheet</span><svg width="7" height="4"><use href="#arrow"/></svg></button>
    <div class="typebar"><label class="combo"><select aria-label="Instance"><option>Sheet: Unnamed</option></select><svg width="8" height="5"><use href="#chev"/></svg></label><button><svg width="11" height="11" viewBox="0 0 11 11"><path d="M1 2h4v3H1zM6 2h4v3H6zM1 6h4v4H1zM6 6h4v4H6z" fill="#eef2f7" stroke="#555" stroke-width=".9"/></svg>Edit Type</button></div>
    <div class="gridwrap">
    <table class="grid">
      <colgroup><col class="c1"><col class="c2"><col class="c3"></colgroup>
      <tbody>
      <tr class="sec"><th colspan="2">Graphics</th><td><svg width="6" height="6"><use href="#fold"/></svg></td></tr>
      <tr><th>Visibility/Graphi...</th><td class="btn"><button>Edit...</button></td><td></td></tr>
      <tr class="ro"><th>Scale</th><td></td><td></td></tr>
      <tr class="sec"><th colspan="2">Identity Data</th><td><svg width="6" height="6"><use href="#fold"/></svg></td></tr>
      <tr class="ro"><th>Dependency</th><td>Independent</td><td></td></tr>
      <tr class="ro"><th>Referencing She...</th><td></td><td></td></tr>
      <tr class="ro"><th>Referencing Det...</th><td></td><td></td></tr>
      <tr class="ro"><th>Current Revisio...</th><td><input type="checkbox" disabled aria-label="Current Revision Issued"></td><td></td></tr>
      <tr class="ro"><th>Current Revisio...</th><td></td><td></td></tr>
      <tr class="ro"><th>Current Revisio...</th><td></td><td></td></tr>
      <tr class="ro"><th>Current Revisio...</th><td></td><td></td></tr>
      <tr class="ro"><th>Current Revisio...</th><td></td><td></td></tr>
      <tr class="ro"><th>Current Revision</th><td></td><td></td></tr>
      <tr><th>Approved By</th><td>Approver</td><td></td></tr>
      <tr><th>Designed By</th><td>Designer</td><td></td></tr>
      <tr><th>Checked By</th><td>Checker</td><td></td></tr>
      <tr><th>Drawn By</th><td>Author</td><td></td></tr>
      <tr><th>Sheet Number</th><td>A110</td><td></td></tr>
      <tr><th>Sheet Name</th><td>Unnamed</td><td></td></tr>
      <tr><th>Sheet Issue Date</th><td>08/19/25</td><td></td></tr>
      <tr><th>Appears In She...</th><td><input type="checkbox" checked aria-label="Appears In Sheet List"></td><td></td></tr>
      <tr><th>Revisions on Sh...</th><td class="btn"><button>Edit...</button></td><td></td></tr>
      <tr class="sec"><th colspan="2">Other</th><td><svg width="6" height="6"><use href="#fold"/></svg></td></tr>
      <tr class="ro"><th>File Path</th><td>C:\Users\manoly...</td><td></td></tr>
      <tr><th>Guide Grid</th><td>&lt;None&gt;</td><td></td></tr>
      </tbody>
    </table>
    </div>
    <footer><a href="#">Properties help</a><button disabled>Apply</button></footer>
  </aside>
</main>

<footer class="status">
  <p>Click to select, TAB for alternates, CTRL adds, SHIFT unselects.</p>
  <div class="mid">
    <button aria-label="Worksets"><svg width="16" height="16" viewBox="0 0 16 16"><path d="M5 6V2h6v5" fill="none" stroke="#3f9a3a" stroke-width="2"/><path d="M1 8l4-2 4 2v5l-4 2-4-2z" fill="#5fa9dc" stroke="#1e5f9c"/><path d="M1 8l4 2 4-2" fill="none" stroke="#d8ecfa"/><path d="M13 8v7M11 5v2l2 2 2-2V5" fill="none" stroke="#345" stroke-width="1.400"/></svg></button>
    <label class="combo"><select aria-label="Active workset" disabled><option></option></select><svg width="8" height="5"><use href="#chev"/></svg></label>
    <span class="count gapped"><svg width="14" height="15" viewBox="0 0 14 15"><path d="M4 1h9v5H9l-3 3v5H1c3-2 1-4 5-6l1-2H4z" fill="#e0e0e0" stroke="#999"/></svg>:0</span>
    <button aria-label="Design options"><svg width="16" height="15" viewBox="0 0 16 15"><path d="M1 1h14v13H1z" fill="#fff" stroke="#444" stroke-width="1.300"/><path d="M1 2h14" stroke="#444" stroke-width="2"/><path d="M3 5.500h3M6 8.500h2M6 11.500h2M9 8.500h5M9 11.500h5" stroke="#444"/></svg></button>
    <button aria-label="Pick to edit"><svg width="14" height="14" viewBox="0 0 14 14"><path d="M1 1h12v12H9V8L5 4H1z" fill="#8f8f8f"/><path d="M1 9h4V7l4 3-4 3v-2H1z" fill="#e8e8e8"/></svg></button>
    <label class="combo"><select aria-label="Design option" disabled><option>Main Model</option></select><svg width="8" height="5"><use href="#chev"/></svg></label>
  </div>
  <div class="sel-tools">
    <button aria-label="Select links"><svg width="16" height="16" viewBox="0 0 16 16"><rect x="1" y="2" width="6" height="4" rx="2" fill="#f7d568" stroke="#c08f16" stroke-width="1.500"/><rect x="8" y="2" width="6" height="4" rx="2" fill="#f7d568" stroke="#c08f16" stroke-width="1.500"/><svg x="5" y="4" width="8" height="12"><use href="#cursor"/></svg></svg></button>
    <button aria-label="Select underlay"><svg width="16" height="16" viewBox="0 0 16 16"><path d="M1 8l5-5h9l-5 5zM1 12h8" fill="#cfe6fb" stroke="#2a75b8" stroke-width="1.300"/><svg x="7" y="4" width="8" height="12"><use href="#cursor"/></svg></svg></button>
    <button aria-label="Select pinned"><svg width="16" height="16" viewBox="0 0 16 16"><path d="M2 1h9v2H9v3l3 3H1l3-3V3H2zM6 9v5" fill="#f0a060" stroke="#b55a18"/><svg x="7" y="4" width="8" height="12"><use href="#cursor"/></svg></svg></button>
    <button aria-label="Select by face"><svg width="16" height="16" viewBox="0 0 16 16"><path d="M2 3l7-2v12l-7 1z" fill="#9fd0f5" stroke="#2a75b8"/><svg x="7" y="4" width="8" height="12"><use href="#cursor"/></svg></svg></button>
    <button aria-label="Drag elements"><svg width="16" height="16" viewBox="0 0 16 16"><path d="M6 0l2 3H7v2h2V4l3 2-3 2V7H7v2h1l-2 3-2-3h1V7H3v1L0 6l3-2v1h2V3H4z" fill="#222"/><svg x="8" y="4" width="8" height="12"><use href="#cursor"/></svg></svg></button>
    <button aria-label="Background processes"><svg width="14" height="14" viewBox="0 0 14 14"><circle cx="7" cy="7" r="5" fill="none" stroke="#aaa" stroke-width="3" stroke-dasharray="3 1"/></svg></button>
    <button class="count"><svg width="16" height="15" viewBox="0 0 16 15"><path d="M1 1h14L10 8v6l-4-2V8z" fill="#c4d4e6" stroke="#555" stroke-width="1.200"/></svg>:0</button>
  </div>
</footer>
</body>
</html>
```

FILE: styles.css
```css
* { box-sizing: border-box; }
body { margin: 0; height: 100vh; display: flex; flex-direction: column; background: #cdcdcd; color: #333; font: 11px/16px "Open Sans", "Noto Sans", sans-serif; overflow: hidden; }
h1, h2, p, ul { margin: 0; padding: 0; font-size: inherit; font-weight: 400; }
button { margin: 0; padding: 0; border: 0; background: none; color: inherit; font: inherit; display: inline-flex; align-items: center; justify-content: center; }
svg { flex: none; display: block; }
.defs { position: absolute; width: 0; height: 0; }

.titlebar { flex: none; height: 32px; display: flex; align-items: center; padding: 0 4px; }
.quick { display: grid; align-items: center; height: 32px; grid-template-columns: 22px 24px 26px 22px 22px 10px 24px 8px 26px 8px 26px 4px 24px 8px 26px 20px 24px 6px 22px 10px 22px 24px 4px 26px 20px 10px 16px; }
.vsep { width: 1px; height: 20px; background: #bcbcbc; justify-self: center; }
.lit { height: 21px; background: #b9dbf8; border: 1px solid #2f7ec4; }
.apptitle { flex: 1; text-align: center; line-height: 24px; padding-bottom: 4px; }
.account { display: flex; align-items: center; gap: 7px; margin-right: 58px; }
.account .user { gap: 4px; }
.winbtns { display: flex; gap: 12px; padding-right: 6px; }

.tabs { flex: none; height: 18px; padding-left: 4px; display: grid; grid-template-columns: 42px 84px 56px 46px 54px 50px 60px 62px 88px 79px 40px 58px 58px 64px 55px 62px; }
.tabs .file { background: #2a7ab5; color: #fff; }
.tabs .current { background: #eee; }

.ribbon { flex: none; display: flex; height: 88px; margin: 0 3px; background: #eee; border-bottom: 1px solid #cfcfcf; }
.panel { display: flex; flex-direction: column; border-right: 1px solid #d6d6d6; }
.panel h2 { text-align: center; height: 14px; line-height: 14px; display: flex; justify-content: center; align-items: center; gap: 6px; }
.panel .tools { flex: 1; padding-top: 4px; display: grid; align-content: start; justify-content: center; }
.p-select { width: 55px; padding-left: 1px; }
.bigmodify { width: 41px; height: 66px; flex-direction: column; justify-content: flex-start; gap: 7px; padding-top: 7px; background: #b9d8f4; border: 1px solid #3f87c8; }
.p-props { width: 60px; }
.p-props .tools { row-gap: 1px; grid-template-rows: 32px 32px; }
.p-props button { width: 35px; }
.on { background: #b3d5f3; border: 1px solid #3f87c8; }
.p-clip { width: 74px; padding-left: 2px; }
.p-clip .tools { grid-template-columns: 40px 18px; column-gap: 7px; }
.paste { flex-direction: column; gap: 4px; justify-content: flex-start; padding-top: 3px; }
.off { color: #a5a5a5; }
.stack { display: grid; grid-template-rows: repeat(3, 22px); align-items: center; }
.p-geo { width: 129px; }
.p-geo .tools { grid-template-columns: 58px 17px 17px 6px; grid-template-rows: repeat(3, 22px); column-gap: 7px; grid-auto-flow: column; }
.p-geo .stack { grid-row: 1 / 4; }
.row { justify-content: flex-start; gap: 4px; }
.row .push { margin-left: 4px; }
.lone { grid-row: 2; align-self: center; color: #999; }
.p-modify { width: 222px; }
.p-modify .tools { grid-template-columns: repeat(4, 28px) 70px; column-gap: 8px; row-gap: 2px; grid-template-rows: 32px 32px; align-items: center; justify-content: start; padding-left: 6px; }
.minis { grid-column: 5; grid-row: 1 / 3; display: grid; grid-template-columns: repeat(3, 24px); grid-template-rows: repeat(3, 22px); margin-left: -2px; }
.p-view { width: 61px; }
.p-view .tools { grid-template-columns: 26px 18px; grid-template-rows: repeat(3, 22px); column-gap: 6px; }
.pair { justify-content: flex-start; gap: 4px; color: #888; }
.p-measure { width: 52px; }
.p-measure .tools, .p-create .tools { grid-template-rows: 33px 33px; }
.wide { gap: 7px; }
.p-create { width: 76px; border-right: 0; }
.p-create .tools { grid-template-columns: 30px 30px; column-gap: 5px; }
.optionsbar { flex: none; height: 26px; margin: 0 3px 1px; background: #eee; border-bottom: 1px solid #dadada; }

.work { flex: 1; min-height: 0; display: grid; grid-template-columns: 213px 1fr 203px; column-gap: 2px; margin: 0 3px; }
.dockhead { height: 19px; flex: none; display: flex; align-items: center; justify-content: space-between; padding: 0 3px 0 4px; background: #eee; }
.browser { background: #fff; }
.tree { list-style: none; display: grid; grid-template-rows: repeat(21, 1fr); height: 365px; }
.tree li { display: flex; align-items: center; }
.tree svg { margin: 0 0 0 2px; width: 15px; }
.tree span { padding: 0 2px; margin-left: 1px; white-space: nowrap; }
.tree .g + span { margin-left: 3px; }
.tree .sel { background: #e3e3e3; font-weight: 700; color: #111; }
.g { position: relative; width: 19px; align-self: stretch; flex: none; }
.g.v::before, .g.t::before, .g.box::before { content: ""; position: absolute; left: 9px; top: 0; bottom: 0; border-left: 1px solid #d3d3d3; }
.g.end::before { bottom: 50%; }
.g.first::before { top: 50%; }
.g.t::after { content: ""; position: absolute; left: 9px; right: -3px; top: 50%; border-top: 1px solid #d3d3d3; }
.g.box { background: linear-gradient(#d3d3d3, #d3d3d3) right center / 6px 1px no-repeat; }
.g.box::after { content: ""; position: absolute; left: 5px; top: 4px; width: 9px; height: 9px; border: 1px solid #a9a9b4; background: linear-gradient(#667, #667) center / 5px 1px no-repeat #f7f7f7; }
.g.plus::after { background: linear-gradient(#446, #446) center / 5px 1px no-repeat, linear-gradient(#446, #446) center / 1px 5px no-repeat, #f7f7f7; }

.views { display: flex; flex-direction: column; min-width: 0; background: #fff; }
.viewtabs { height: 19px; flex: none; display: flex; background: #cdcdcd; }
.viewtabs .idle { width: 132px; justify-content: flex-start; padding-left: 5px; gap: 6px; color: #666; }
.viewtabs .idle svg { opacity: .55; }
.viewtabs .active { display: flex; align-items: center; gap: 7px; padding: 0 4px; background: #fff; font-weight: 700; }
.viewtabs .more { margin-left: auto; width: 20px; }
.viewbody { flex: 1; min-height: 0; display: flex; }
.drawing { flex: 1; min-width: 0; height: 100%; font-family: "Liberation Sans", sans-serif; fill: #000; }
.vscroll { width: 16px; margin-right: 2px; background: #eee; display: flex; flex-direction: column; align-items: center; justify-content: space-between; padding: 8px 0 5px; color: #222; }
.vscroll .up { transform: rotate(180deg); }
.vscroll i { width: 15px; height: 16px; background: #cdcdcd; }
.hscroll { flex: none; height: 17px; display: flex; align-items: center; background: #eee; padding: 0 4px; gap: 8px; border-bottom: 1px solid #fff; color: #222; }
.hscroll i { width: 16px; height: 15px; background: #cdcdcd; margin: 0 auto; }
.hscroll .left { transform: rotate(90deg); }
.hscroll .right { transform: rotate(-90deg); }
.lines { fill: none; stroke: #444; stroke-width: 1; }
.caps { font-size: 5px; }
.pros { font-size: 3px; font-weight: 700; }
.names { font-size: 17px; text-anchor: middle; }
.logo { font: 700 6px "Open Sans", sans-serif; text-anchor: middle; }
.tiny { font-size: 2px; }
.end { text-anchor: end; }
.stamp { font-size: 4px; text-anchor: middle; fill: #444; }
.vname { font-size: 7px; font-weight: 700; }
.vaddr { font-size: 5px; }
.vsmall { font-size: 3px; }
.number { font-size: 11px; text-anchor: middle; }

.props { display: flex; flex-direction: column; background: #eee; min-height: 0; }
.family { height: 67px; justify-content: flex-start; padding: 2px 4px; gap: 4px; border-top: 1px solid #ddd; }
.family .thumb { width: 61px; height: 61px; display: flex; align-items: center; justify-content: center; border: 1px solid #ddd; background: #f2f2f2; }
.family > svg { margin-left: auto; }
.typebar { display: flex; align-items: center; gap: 4px; height: 20px; }
.typebar button { gap: 3px; }
.combo { position: relative; display: block; }
.combo svg { position: absolute; right: 5px; top: 50%; margin-top: -2px; pointer-events: none; color: #777; }
.combo select { appearance: none; width: 100%; height: 100%; border: 0; border-radius: 0; background: transparent; font: inherit; color: inherit; padding: 0 2px; opacity: 1; display: block; }
.typebar .combo { width: 134px; height: 20px; background: #e0e0e0; border: 1px solid #c6c6c6; }
.gridwrap { flex: 1; background: #fff; min-height: 0; overflow: hidden; }
.grid { width: 100%; height: 465px; table-layout: fixed; border-collapse: collapse; }
.c1 { width: 97px; } .c3 { width: 12px; }
.grid th, .grid td { padding: 0 0 1px 1px; height: 18px; line-height: 14px; text-align: left; font-weight: 400; white-space: nowrap; border: 1px solid #cfcfcf; border-left-width: 0; vertical-align: middle; }
.grid th { padding-left: 7px; }
.grid .sec th, .grid .sec td { background: #dadada; border-color: #dadada; padding-left: 2px; }
.grid .sec td { vertical-align: top; }
.ro { color: #888; }
.grid .btn { padding: 0; }
.btn button { width: 100%; height: 17px; background: #e1e1e1; border: 1px solid #b5b5b5; }
.grid input { appearance: none; display: block; width: 13px; height: 13px; margin: 0; border: 1px solid #555; background: #fff; }
.grid input:disabled { border-color: #d5d5d5; }
.grid input:checked::after { content: ""; display: block; width: 8px; height: 4px; margin: 2px 0 0 1px; border: solid #333; border-width: 0 0 1px 1px; transform: rotate(-45deg); }
.props footer { flex: none; height: 24px; display: flex; justify-content: space-between; align-items: center; padding: 0 1px 0 2px; }
.props a { color: #2a6fb5; }
.props footer button { width: 69px; height: 20px; background: #cdcdcd; color: #8e8e8e; }

.status { flex: none; height: 26px; display: grid; grid-template-columns: 42% auto 1fr; align-items: center; padding: 0 4px; color: #222; }
.mid { display: flex; align-items: center; gap: 6px; padding-left: 6px; }
.status .combo { width: 190px; height: 17px; background: #fff; color: #888; }
.count { display: inline-flex; align-items: center; gap: 3px; }
.gapped { padding-right: 8px; }
.sel-tools { display: flex; gap: 6px; justify-content: flex-end; padding-right: 58px; }
```
